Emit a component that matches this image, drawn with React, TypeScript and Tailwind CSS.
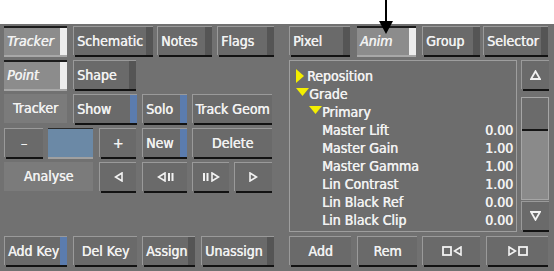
import React from "react";

type Stripe = "none" | "dark" | "blue" | "white";

function Btn({
  w,
  label,
  stripe = "none",
  selected = false,
  className = "",
}: {
  w: string;
  label: React.ReactNode;
  stripe?: Stripe;
  selected?: boolean;
  className?: string;
}) {
  const stripeCls =
    stripe === "dark"
      ? "bg-[#555555]"
      : stripe === "blue"
        ? "bg-[#5b7cae]"
        : stripe === "white"
          ? "bg-[#ededed]"
          : "";
  return (
    <div className={`flex flex-col ${w} ${className}`}>
      <div
        className={
          selected
            ? "flex h-[29px] border-t-2 border-[#1c1c1c] bg-[#8c8c8c]"
            : "flex h-[29px] border-t border-l border-[#9a9a9a] bg-[#6a6a6a]"
        }
      >
        <div
          className={`flex flex-1 items-center overflow-hidden whitespace-nowrap ${
            stripe === "none" ? "justify-center" : "pl-[3px]"
          } ${selected ? "italic" : ""}`}
        >
          {label}
        </div>
        {stripe !== "none" && <div className={`w-[7px] ${stripeCls}`} />}
      </div>
      <div className={selected ? "h-[2px] bg-[#a8a8a8]" : "ml-[2px] h-[2px] bg-[#121212]"} />
    </div>
  );
}

function Flat({ w, label, className = "" }: { w: string; label: string; className?: string }) {
  return (
    <div className={`flex h-[29px] items-center justify-center bg-[#7b7b7b] ${w} ${className}`}>
      {label}
    </div>
  );
}

const Tri = ({ dir }: { dir: "l" | "r" }) => (
  <svg width="9" height="10" viewBox="0 0 9 10">
    {dir === "l" ? (
      <path d="M8 1 L1.5 5 L8 9 Z" fill="none" stroke="#f2f2f2" strokeWidth="1.6" />
    ) : (
      <path d="M1 1 L7.5 5 L1 9 Z" fill="none" stroke="#f2f2f2" strokeWidth="1.6" />
    )}
  </svg>
);

const Bars = () => (
  <svg width="6" height="10" viewBox="0 0 6 10">
    <rect x="0" y="1" width="2" height="8" fill="#f2f2f2" />
    <rect x="3.5" y="1" width="2" height="8" fill="#f2f2f2" />
  </svg>
);

const Box = () => (
  <svg width="10" height="10" viewBox="0 0 10 10">
    <rect x="1" y="1" width="8" height="8" fill="none" stroke="#f2f2f2" strokeWidth="1.8" />
  </svg>
);

const rows: { label: string; value?: string; indent: number; tri?: "r" | "d" }[] = [
  { label: "Reposition", indent: 0, tri: "r" },
  { label: "Grade", indent: 0, tri: "d" },
  { label: "Primary", indent: 1, tri: "d" },
  { label: "Master Lift", value: "0.00", indent: 2 },
  { label: "Master Gain", value: "1.00", indent: 2 },
  { label: "Master Gamma", value: "1.00", indent: 2 },
  { label: "Lin Contrast", value: "1.00", indent: 2 },
  { label: "Lin Black Ref", value: "0.00", indent: 2 },
  { label: "Lin Black Clip", value: "0.00", indent: 2 },
];

export default function App() {
  return (
    <div className="relative h-[271px] w-[554px] overflow-hidden bg-white font-['DejaVu_Sans_Condensed','Liberation_Sans_Narrow','Lato',sans-serif] text-[14px] font-normal text-[#f2f2f2] [text-shadow:0.45px_0_0_#f2f2f2]">
      <div className="h-[24px] bg-white" />
      <div className="flex h-[247px] bg-[#717171] pl-[4px] pt-[2px] pb-[4px]">
        {/* left panel */}
        <div className="flex w-[270px] flex-col">
          <div className="flex">
            <Btn w="w-[63px]" label="Tracker" stripe="white" selected />
            <Btn w="w-[80px]" label="Schematic" stripe="dark" className="ml-[6px]" />
            <Btn w="w-[55px]" label="Notes" stripe="dark" className="ml-[4px]" />
            <Btn w="w-[57px]" label="Flags" stripe="dark" className="ml-[5px]" />
          </div>
          <div className="mt-[3px] flex">
            <Btn w="w-[63px]" label="Point" stripe="white" selected />
            <Btn w="w-[63px]" label="Shape" stripe="dark" className="ml-[6px]" />
          </div>
          <div className="mt-[3px] flex">
            <Flat w="w-[63px]" label="Tracker" />
            <Btn w="w-[64px]" label="Show" stripe="blue" className="ml-[6px]" />
            <Btn w="w-[45px]" label="Solo" stripe="blue" className="ml-[5px]" />
            <Btn w="w-[80px]" label="Track Geom" className="ml-[5px]" />
          </div>
          <div className="mt-[3px] flex">
            <Btn w="w-[39px]" label="–" />
            <div className="ml-[5px] flex w-[45px] flex-col">
              <div className="h-[29px] border-t border-[#2a2a2a] bg-[#6b89a6]" />
              <div className="h-[2px] bg-[#a0a0a0]" />
            </div>
            <Btn w="w-[37px]" label="+" className="ml-[6px]" />
            <Btn w="w-[45px]" label="New" stripe="blue" className="ml-[6px]" />
            <Btn w="w-[80px]" label="Delete" className="ml-[5px]" />
          </div>
          <div className="mt-[3px] flex">
            <Flat w="w-[89px]" label="Analyse" />
            <Btn w="w-[37px]" label={<Tri dir="l" />} className="ml-[6px]" />
            <Btn
              w="w-[45px]"
              label={
                <span className="flex items-center gap-[2px]">
                  <Tri dir="l" />
                  <Bars />
                </span>
              }
              className="ml-[6px]"
            />
            <Btn
              w="w-[37px]"
              label={
                <span className="flex items-center gap-[2px]">
                  <Bars />
                  <Tri dir="r" />
                </span>
              }
              className="ml-[5px]"
            />
            <Btn w="w-[38px]" label={<Tri dir="r" />} className="ml-[5px]" />
          </div>
          <div className="mt-auto flex">
            <Btn w="w-[63px]" label="Add Key" stripe="blue" />
            <Btn w="w-[64px]" label="Del Key" className="ml-[6px]" />
            <Btn w="w-[53px]" label="Assign" stripe="dark" className="ml-[5px]" />
            <Btn w="w-[73px]" label="Unassign" stripe="dark" className="ml-[6px]" />
          </div>
        </div>

        {/* right panel */}
        <div className="ml-[15px] flex w-[260px] flex-col">
          <div className="flex">
            <Btn w="w-[61px]" label="Pixel" stripe="dark" />
            <Btn w="w-[59px]" label="Anim" stripe="white" selected className="ml-[7px]" />
            <Btn w="w-[58px]" label="Group" stripe="dark" className="ml-[6px]" />
            <Btn w="w-[65px]" label="Selector" stripe="dark" className="ml-[3px]" />
          </div>
          <div className="mt-[3px] flex h-[172px]">
            <div className="flex w-[229px] flex-col border border-[#9e9e9e] bg-[#6d6d6d] pt-[6px] pr-[3px]">
              {rows.map((r) => (
                <div key={r.label} className="flex h-[18px] items-center">
                  <div
                    className={`flex items-center ${
                      r.indent === 0 ? "pl-[6px]" : r.indent === 1 ? "pl-[19px]" : "pl-[32px]"
                    }`}
                  >
                    {r.tri === "r" && (
                      <svg width="8" height="14" viewBox="0 0 8 14" className="mr-[3px]">
                        <path d="M0 0 L8 7 L0 14 Z" fill="#f3ee00" />
                      </svg>
                    )}
                    {r.tri === "d" && (
                      <svg width="13" height="8" viewBox="0 0 13 8" className="mb-[4px]">
                        <path d="M0 0 L13 0 L6.5 8 Z" fill="#f3ee00" />
                      </svg>
                    )}
                    <span>{r.label}</span>
                  </div>
                  {r.value && <span className="ml-auto">{r.value}</span>}
                </div>
              ))}
            </div>
            <div className="ml-[4px] flex w-[28px] flex-col">
              <Btn
                w="w-[28px]"
                label={
                  <svg width="11" height="10" viewBox="0 0 11 10">
                    <path d="M5.5 1.2 L10 9 L1 9 Z" fill="none" stroke="#f2f2f2" strokeWidth="1.8" />
                  </svg>
                }
              />
              <div className="mt-[6px] flex h-[104px] flex-col border border-[#a6a6a6] bg-[#8a8a8a]">
                <div className="h-[33px] border-b-2 border-[#151515] bg-[#6b6b6b]" />
              </div>
              <Btn
                className="mt-[1px]"
                w="w-[28px]"
                label={
                  <svg width="11" height="10" viewBox="0 0 11 10">
                    <path d="M5.5 8.8 L10 1 L1 1 Z" fill="none" stroke="#f2f2f2" strokeWidth="1.8" />
                  </svg>
                }
              />
            </div>
          </div>
          <div className="mt-auto flex">
            <Btn w="w-[62px]" label="Add" />
            <Btn w="w-[60px]" label="Rem" className="ml-[6px]" />
            <Btn
              w="w-[58px]"
              label={
                <span className="flex items-center gap-[1px]">
                  <Box />
                  <Tri dir="l" />
                </span>
              }
              className="ml-[5px]"
            />
            <Btn
              w="w-[62px]"
              label={
                <span className="flex items-center gap-[1px]">
                  <Tri dir="r" />
                  <Box />
                </span>
              }
              className="ml-[6px]"
            />
          </div>
        </div>
      </div>

      {/* pointer arrow */}
      <div className="absolute left-[385px] top-0 h-[24px] w-[2px] bg-black" />
      <svg className="absolute left-[379px] top-[21px]" width="14" height="13" viewBox="0 0 14 13">
        <path d="M0 0 L14 0 L7 13 Z" fill="#000" />
      </svg>
    </div>
  );
}
